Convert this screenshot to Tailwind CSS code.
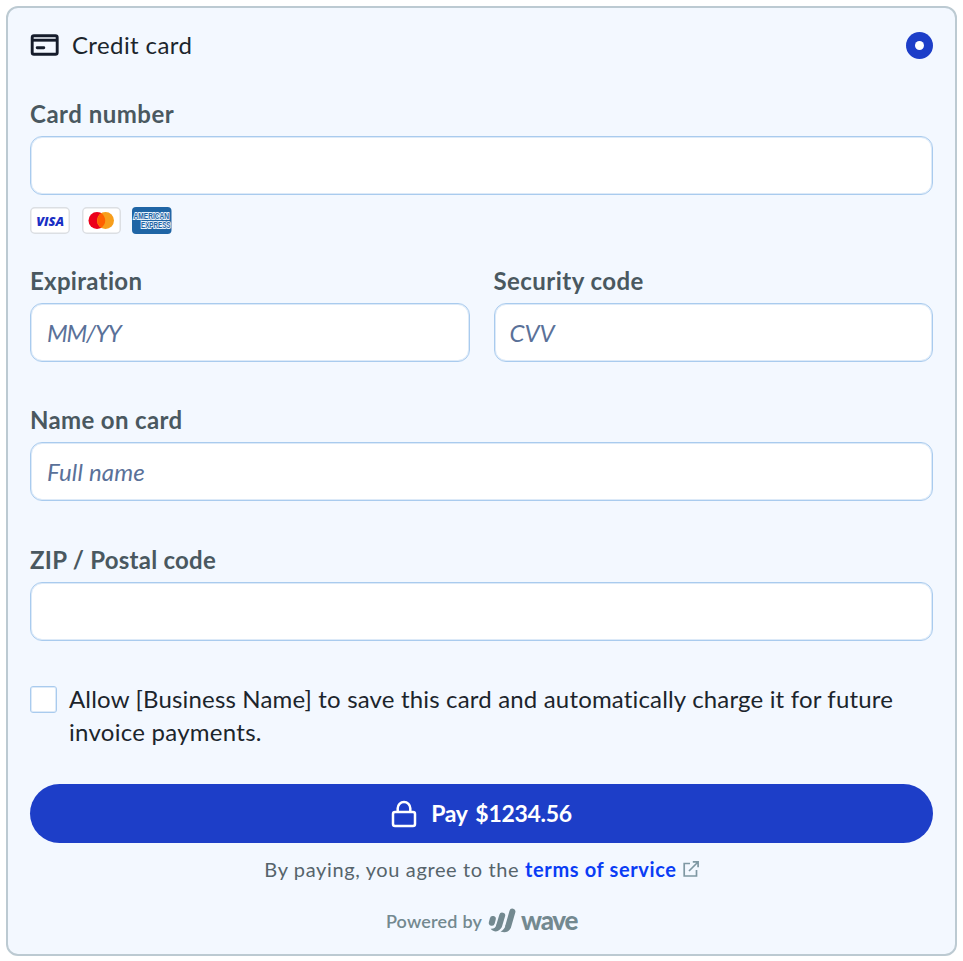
<!DOCTYPE html>
<html lang="en">
<head>
  <meta charset="UTF-8" />
  <meta name="viewport" content="width=device-width, initial-scale=1.0"/>
  <title>Credit card payment</title>
  <script src="https://cdn.jsdelivr.net/npm/@tailwindcss/browser@4"></script>
</head>
<body class="h-[961px] overflow-hidden bg-white pl-1.5 pt-1.5 font-['Lato',sans-serif] text-2xl text-[#1c252c]">
  <form class="flex h-[950px] w-[951px] flex-col rounded-xl border-2 border-[#bccad2] bg-[#f3f8ff] px-[22px]">
    <!-- Header -->
    <div class="mt-[23px] flex h-7 items-center">
      <svg class="h-[22px] w-[29px]" viewBox="0 0 29 22" fill="none" stroke="#151c2b" stroke-width="2.9">
        <rect x="2.2" y="1.8" width="25" height="18.4" rx="1.8" />
        <path d="M2 6.2h25" />
        <path d="M7.2 13.8h6.6" stroke-linecap="round" />
      </svg>
      <h1 class="ml-[13px] tracking-[0.4px]">Credit card</h1>
      <span class="ml-auto flex size-[27px] items-center justify-center rounded-full bg-[#1d3ec8]"><span class="size-[9px] rounded-full bg-white"></span></span>
    </div>

    <!-- Card number -->
    <label for="number" class="mt-[37px] h-10 pt-0.5 font-bold leading-8 tracking-[0.5px] text-[#4a5860]">Card number</label>
    <input id="number" type="text" class="h-[59px] shrink-0 rounded-xl border border-[#a9cbee] bg-white px-4 inset-ring inset-ring-[#a9cbee]/40" />
    <div class="mt-3 flex h-[27px]">
      <svg class="h-[27px] w-10" viewBox="0 0 40 27">
        <rect x=".75" y=".75" width="38.5" height="25.5" rx="4" fill="#fff" stroke="#dcdfe3" stroke-width="1.5" />
        <text x="6.2" y="18.8" font-family="Open Sans, sans-serif" font-size="13" font-weight="800" font-style="italic" fill="#1a2fc4" textLength="28" lengthAdjust="spacingAndGlyphs">VISA</text>
      </svg>
      <svg class="ml-3 h-[27px] w-[39px]" viewBox="0 0 39 27">
        <rect x=".75" y=".75" width="37.5" height="25.5" rx="4" fill="#fff" stroke="#dcdfe3" stroke-width="1.5" />
        <circle cx="15" cy="13.5" r="8.5" fill="#eb001b" />
        <circle cx="23.5" cy="13.5" r="8.5" fill="#f79e1b" />
        <path d="M19.25 6.3a8.5 8.5 0 0 1 0 14.4a8.5 8.5 0 0 1 0-14.4z" fill="#ff5f00" />
      </svg>
      <svg class="ml-[11px] h-[27px] w-10" viewBox="0 0 40 27" font-family="Liberation Sans, sans-serif" font-size="8.5" font-weight="700" fill="#1f65a5" stroke="#e6f1fa" stroke-width="2" paint-order="stroke">
        <rect width="39.5" height="27" rx="4" fill="#1f65a5" stroke="none" />
        <text x="1.5" y="12.4" textLength="35.5" lengthAdjust="spacingAndGlyphs">AMERICAN</text>
        <text x="9" y="21" textLength="29.5" lengthAdjust="spacingAndGlyphs">EXPRESS</text>
      </svg>
    </div>

    <!-- Expiration and security code -->
    <div class="mt-[29px] grid grid-cols-2 gap-6">
      <div class="flex flex-col">
        <label for="expiry" class="h-10 pt-0.5 font-bold leading-8 tracking-[0.3px] text-[#4a5860]">Expiration</label>
        <input id="expiry" type="text" placeholder="MM/YY" class="h-[59px] rounded-xl border border-[#a9cbee] bg-white px-4 tracking-[-1.2px] inset-ring inset-ring-[#a9cbee]/40 placeholder:italic placeholder:text-[#5a7199]" />
      </div>
      <div class="flex flex-col">
        <label for="cvv" class="h-10 pt-0.5 font-bold leading-8 tracking-[0.45px] text-[#4a5860]">Security code</label>
        <input id="cvv" type="text" placeholder="CVV" class="h-[59px] rounded-xl border border-[#a9cbee] bg-white px-[15px] inset-ring inset-ring-[#a9cbee]/40 placeholder:italic placeholder:text-[#5a7199]" />
      </div>
    </div>

    <!-- Name -->
    <label for="name" class="mt-10 h-10 pt-0.5 font-bold leading-8 tracking-[0.35px] text-[#4a5860]">Name on card</label>
    <input id="name" type="text" placeholder="Full name" class="h-[59px] shrink-0 rounded-xl border border-[#a9cbee] bg-white px-4 tracking-[0.2px] inset-ring inset-ring-[#a9cbee]/40 placeholder:italic placeholder:text-[#5a7199]" />

    <!-- Postal code -->
    <label for="zip" class="mt-[41px] h-10 pt-0.5 font-bold leading-8 tracking-[0.25px] text-[#4a5860]">ZIP / Postal code</label>
    <input id="zip" type="text" class="h-[59px] shrink-0 rounded-xl border border-[#a9cbee] bg-white px-4 inset-ring inset-ring-[#a9cbee]/40" />

    <!-- Save card -->
    <label class="mt-[41px] flex items-start gap-3 leading-[33px]">
      <input type="checkbox" class="mt-1 size-[27px] shrink-0 appearance-none rounded-[3px] border border-[#a9cbee] bg-white inset-ring inset-ring-[#a9cbee]/40" />
      <span><span class="tracking-[0.17px]">Allow [Business Name] to save this card and automatically charge it for future</span><br /><span class="tracking-[0.27px]">invoice payments.</span></span>
    </label>

    <button type="button" class="mt-9 flex h-[59px] shrink-0 items-center justify-center rounded-full bg-[#1d3ec8] text-[23px] font-bold text-white">
      <svg class="mr-3.5 h-7 w-[26px]" viewBox="0 0 26 28" fill="none" stroke="currentColor" stroke-width="2.5">
        <rect x="2" y="12" width="22" height="14" rx="2" />
        <path d="M6.7 12V8.3a6.3 6.3 0 0 1 12.6 0V12" />
      </svg>
      <span class="tracking-[-0.3px] [word-spacing:3px]">Pay $1234.56</span>
    </button>

    <!-- Footer -->
    <p class="mt-2.5 flex h-8 items-center justify-center text-xl tracking-[0.63px] text-[#56646b]">
      <span>By paying, you agree to the <a href="#" class="font-bold text-[#0a3cf5]">terms of service</a></span>
      <svg class="ml-1.5 size-4" viewBox="0 0 16 16" fill="none" stroke="#7f98a3" stroke-width="1.7">
        <path d="M7 2.5H1.2V15H13.5V9M9.8.9H15.1V6.2M15 1L6 10" />
      </svg>
    </p>
    <div class="mt-[19px] flex h-8 items-center justify-center text-[#738990]">
      <span class="pt-0.5 text-lg font-semibold tracking-[0.2px]">Powered by</span>
      <svg class="ml-1.5 h-[25px] w-7" viewBox="0 0 28 25" fill="none" stroke="currentColor" stroke-width="6" stroke-linecap="round">
        <path d="M4.8 11L3.8 14.8" />
        <path d="M14.2 7.5L11.2 17.5" />
        <path d="M24.4 3.6L20.3 18" />
        <path d="M13.8 18.3C12 24 6.500 25 2.600 20.800C6 21 7.800 19.500 8.600 16.500z" fill="currentColor" stroke="none" />
        <path d="M23 18.800C21.600 23.800 17.500 25.200 12.500 23.400C15.200 22.300 16.700 20.500 17.600 17.300z" fill="currentColor" stroke="none" />
      </svg>
      <span class="ml-[5px] text-[26px] font-black leading-8 tracking-[-1.3px]">wave</span>
    </div>
  </form>
</body>
</html>
